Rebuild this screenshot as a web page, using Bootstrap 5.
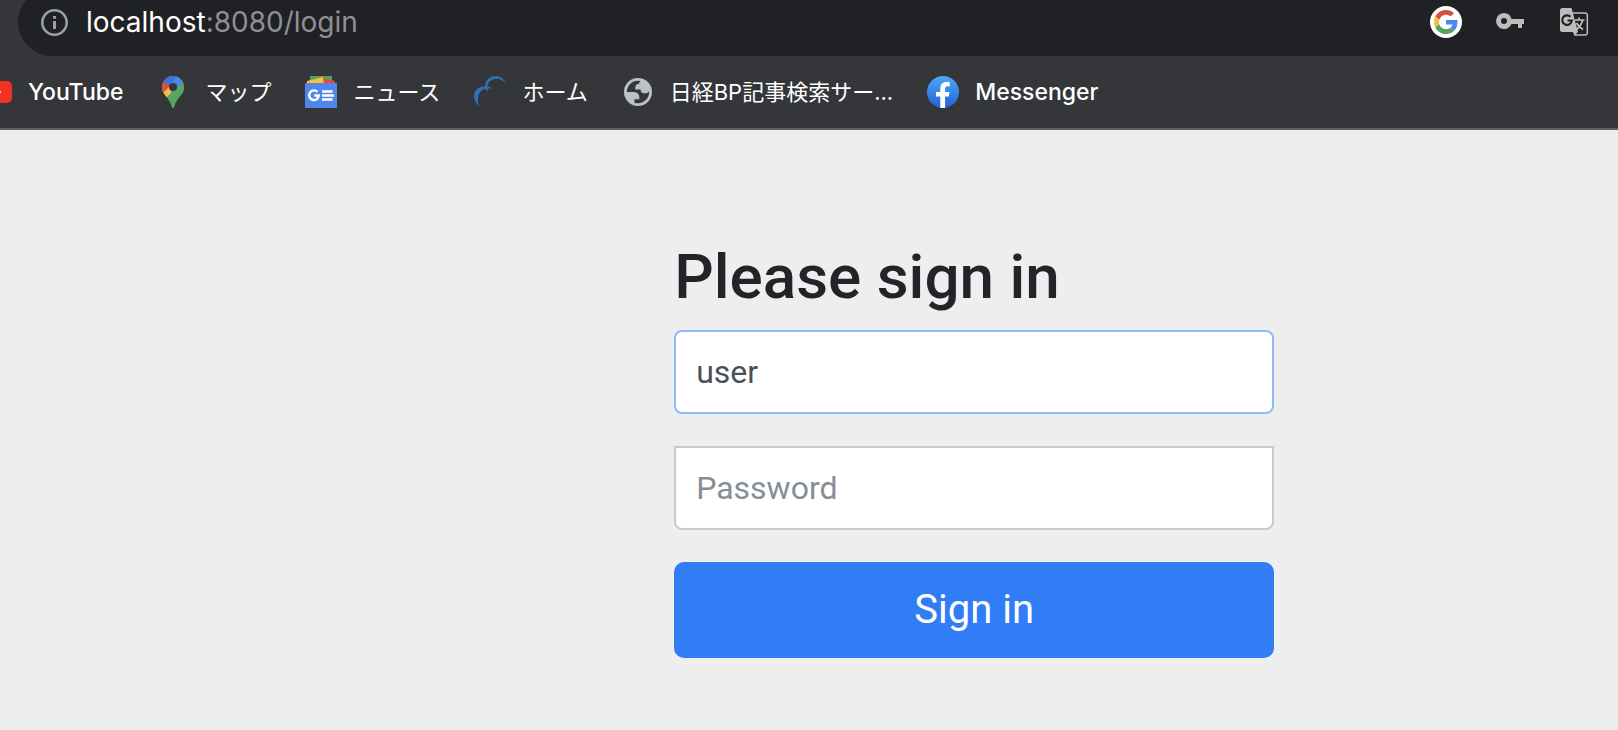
<!DOCTYPE html>
<html lang="ja">
<head>
<meta charset="utf-8">
<meta name="viewport" content="width=device-width, initial-scale=1">
<title>Please sign in</title>
<link href="https://cdn.jsdelivr.net/npm/bootstrap@5.3.0/dist/css/bootstrap.min.css" rel="stylesheet">
<style>
  body { background: #eee; font-family: Roboto, "Noto Sans CJK JP", sans-serif; overflow-x: hidden; }
  svg { flex: none; display: block; }
  .browser-top { background: #35363a; border-bottom: 2px solid #5f6063; }
  .address-row { height: 56px; overflow: hidden; padding-left: 18px; }
  .omnibox { height: 68px; background: #202124; border-radius: 34px 0 0 34px; padding: 0 28px 0 20px; gap: 16px; }
  .url-text { font-size: 28px; line-height: 36px; color: #8f9093; font-family: Inter, sans-serif; }
  .url-text:hover { color: #8f9093; }
  .omni-actions { gap: 32px; }
  .omni-actions button { width: 32px; height: 32px; }
  .bookmarks { height: 72px; gap: 34px; }
  .bookmark { gap: 16px; color: #fff; font-size: 22px; line-height: 32px; font-family: Inter, "Noto Sans CJK JP", sans-serif; }
  .bookmark:hover { color: #fff; }
  .bookmark-latin { font-size: 23px; font-weight: 500; }
  .signin { max-width: 600px; padding-top: 113px; }
  .signin h1 { font-size: 62px; line-height: 68px; font-weight: 500; color: #212529; margin-bottom: 19px; }
  .signin .form-control { height: 84px; font-size: 32px; line-height: 48px; padding: 0 20px; border: 2px solid #c9c9c9; border-radius: 8px; color: #495057; background: #fff; box-shadow: none; margin-bottom: 32px; }
  .signin .field-active { border-color: #8abcfd; }
  .signin .field-last { border-radius: 0 0 8px 8px; }
  .signin .form-control::placeholder { color: #868e96; }
  .signin .btn { height: 96px; font-size: 40px; line-height: 60px; border-radius: 10px; background: #307df6; border: 0; padding: 0; }
</style>
</head>
<body>
<header class="browser-top">
  <div class="address-row d-flex align-items-end">
    <div class="omnibox d-flex align-items-center flex-grow-1">
      <svg width="32" height="32" viewBox="0 0 32 32"><circle cx="16.500" cy="16.500" r="12.200" fill="none" stroke="#9aa0a6" stroke-width="2.600"/><path d="M15 10h3v2.800h-3zM15 15h3v8h-3z" fill="#9aa0a6"/></svg>
      <a class="url-text text-decoration-none flex-grow-1" href="#"><span class="text-white">localhost</span>:8080/login</a>
      <div class="omni-actions d-flex align-items-center">
        <button type="button" class="border-0 bg-transparent p-0" aria-label="Google">
          <svg width="32" height="32" viewBox="0 0 32 32"><circle cx="16" cy="16" r="16" fill="#fff"/><g transform="translate(4 4) scale(.5)"><path fill="#da4f40" d="M24 9.500c3.540 0 6.710 1.220 9.210 3.600l6.850-6.850C35.900 2.380 30.470 0 24 0 14.620 0 6.510 5.380 2.560 13.220l7.980 6.190C12.430 13.720 17.740 9.500 24 9.500z"/><path fill="#4f87ee" d="M46.980 24.550c0-1.570-.15-3.090-.38-4.550H24v9.020h12.940c-.58 2.960-2.260 5.480-4.780 7.180l7.730 6c4.510-4.180 7.090-10.360 7.090-17.650z"/><path fill="#f3bd42" d="M10.530 28.590c-.48-1.450-.76-2.990-.76-4.590s.27-3.140.76-4.590l-7.980-6.190C.92 16.460 0 20.120 0 24c0 3.880.92 7.540 2.560 10.780l7.970-6.190z"/><path fill="#57a55c" d="M24 48c6.480 0 11.930-2.130 15.890-5.810l-7.730-6c-2.150 1.450-4.920 2.300-8.160 2.300-6.260 0-11.570-4.220-13.470-9.910l-7.980 6.190C6.510 42.620 14.620 48 24 48z"/></g></svg>
        </button>
        <button type="button" class="border-0 bg-transparent p-0" aria-label="Passwords">
          <svg width="32" height="32" viewBox="0 0 32 32"><path fill="#bdbdbd" fill-rule="evenodd" d="M10 7a8 8 0 1 0 7.500 11H24v4h4v-4h2v-5H17.500A8 8 0 0 0 10 7zm0 5a3 3 0 1 1 0 6 3 3 0 0 1 0-6z"/></svg>
        </button>
        <button type="button" class="border-0 bg-transparent p-0" aria-label="Translate">
          <svg width="32" height="32" viewBox="0 0 32 32"><path d="M14 7h13q2.300 0 2.300 2v18q0 2-2.300 2H17" fill="none" stroke="#bdbdbd" stroke-width="1.500"/><path fill="#bdbdbd" d="M4 2h9.500L20 26H4.500Q2 26 2 23.500V4.500Q2 2 4 2zM15 26h4.800l-3.400 4z"/><path d="M12.500 10.800A4.800 4.800 0 1 0 13.800 14.500H9.500" fill="none" stroke="#202124" stroke-width="2.200"/><path d="M17 14h9.500M21 11.500V14M24.500 14.500c-1 4-3.500 7-6 9M18.500 17c1.500 3 4 5 6.500 6.500" fill="none" stroke="#bdbdbd" stroke-width="1.700"/></svg>
        </button>
      </div>
    </div>
  </div>
  <nav class="bookmarks d-flex align-items-center text-nowrap" aria-label="Bookmarks">
    <a class="bookmark bookmark-latin d-flex align-items-center text-decoration-none" href="#">
      <svg width="12" height="32" viewBox="20 0 12 32"><rect y="5" width="32" height="22" rx="5" fill="#f03223"/><path d="M13 11l8.500 5-8.500 5z" fill="#fff"/></svg>YouTube</a>
    <a class="bookmark d-flex align-items-center text-decoration-none" href="#">
      <svg width="32" height="32" viewBox="-5 0 32 32"><defs><clipPath id="pin"><path d="M11 0A11 11 0 0 0 0 11c0 4 1.500 6.200 4 9.200 3 3.500 4.800 6.300 5.800 10.300.5 2 1.900 2 2.400 0 1-4 2.800-6.800 5.800-10.300 2.500-3 4-5.200 4-9.200A11 11 0 0 0 11 0z"/></clipPath></defs><g clip-path="url(#pin)"><path fill="#5aa55c" d="M0 0h22v32H0z"/><path fill="#f5bf42" d="M-1 14L6 8l11 1L3 23z"/><path fill="#d95040" d="M2 3l7 6-9 9-3-9z"/><path fill="#3a74d8" d="M0 0h16L8 10 1 5z"/><path fill="#5087ec" d="M15 0l8 4-2 3-12 12V9z"/><path fill="#5aa55c" d="M21 6L3.500 23 11 33l12-15z"/></g><circle cx="11" cy="11" r="4" fill="#35363a"/></svg>マップ</a>
    <a class="bookmark d-flex align-items-center text-decoration-none" href="#">
      <svg width="32" height="32" viewBox="0 0 32 32"><path fill="#57a25a" d="M5 0h22v8H5z"/><path fill="#da4f3c" d="M18 2l12 3v4H18z"/><path fill="#f4bf43" d="M2 5l16-4 1 8H2z"/><rect y="7" width="32" height="25" rx="1" fill="#5085ec"/><path d="M12.500 15.900A4.800 4.800 0 1 0 13.800 19.500H9.300" fill="none" stroke="#fff" stroke-width="2.400"/><path d="M17 15.500h10.500M17 19.500h12M17 23.500h10.500" stroke="#fff" stroke-width="2.400"/></svg>ニュース</a>
    <a class="bookmark d-flex align-items-center text-decoration-none" href="#">
      <svg width="32" height="32" viewBox="0 0 32 32"><path fill="#2d72b8" d="M11 10.500C11.500 4 16 0 21.500 0c5 0 8.500 3 10.500 7.500C29 4.200 26 2.500 22 2.800c-5 .5-8 3.500-8.800 7.700 2 .2 3.800 1.200 5.300 2.500-2-.7-3-.8-4.500-.5l-.7 3.500-1.300-3.200C6 13.500 2 20 5 30 1 26 0 23 0 20c0-6 5-10 11-9.500z"/></svg>ホーム</a>
    <a class="bookmark d-flex align-items-center text-decoration-none" href="#">
      <svg width="32" height="32" viewBox="0 0 32 32"><g transform="translate(-.8 -.8) scale(1.400)"><circle cx="12" cy="12" r="10" fill="#bdc1c6"/><path fill="#35363a" d="M4 12h4.400c3.407.022 4.922 1.730 4.543 5.127H9.488v2.470a8.004 8.004 0 0 0 10.498-8.083C19.327 12.504 18.332 13 17 13c-2.137 0-3.206-.916-3.206-2.750h-3.748c-.274-2.728.683-4.092 2.870-4.092 0-.975.327-1.597.811-1.970A8.004 8.004 0 0 0 4 12z"/></g></svg>日経BP記事検索サー...</a>
    <a class="bookmark bookmark-latin d-flex align-items-center text-decoration-none" href="#">
      <svg width="32" height="32" viewBox="0 0 32 32"><defs><linearGradient id="fb" x2="0" y2="1"><stop stop-color="#4ba9f8"/><stop offset="1" stop-color="#2460d8"/></linearGradient></defs><circle cx="16" cy="16" r="16" fill="url(#fb)"/><path fill="#fff" d="M13.300 32V20.500H9V16h4.300v-3.500c0-4.200 2.300-6.500 6-6.500 1.500 0 2.600.1 3.500.3v3.900h-2.300c-1.800 0-2.400.9-2.400 2.400V16h4.500l-.8 4.500h-3.700V32z"/></svg>Messenger</a>
  </nav>
</header>
<main class="row g-0">
  <form class="signin col-7 offset-5">
    <h1>Please sign in</h1>
    <input type="text" id="username" class="form-control field-active" aria-label="Username" placeholder="Username" value="user">
    <input type="password" id="password" class="form-control field-last" aria-label="Password" placeholder="Password">
    <button type="submit" class="btn btn-primary w-100">Sign in</button>
  </form>
</main>
<script src="https://cdn.jsdelivr.net/npm/bootstrap@5.3.0/dist/js/bootstrap.bundle.min.js"></script>
</body>
</html>
